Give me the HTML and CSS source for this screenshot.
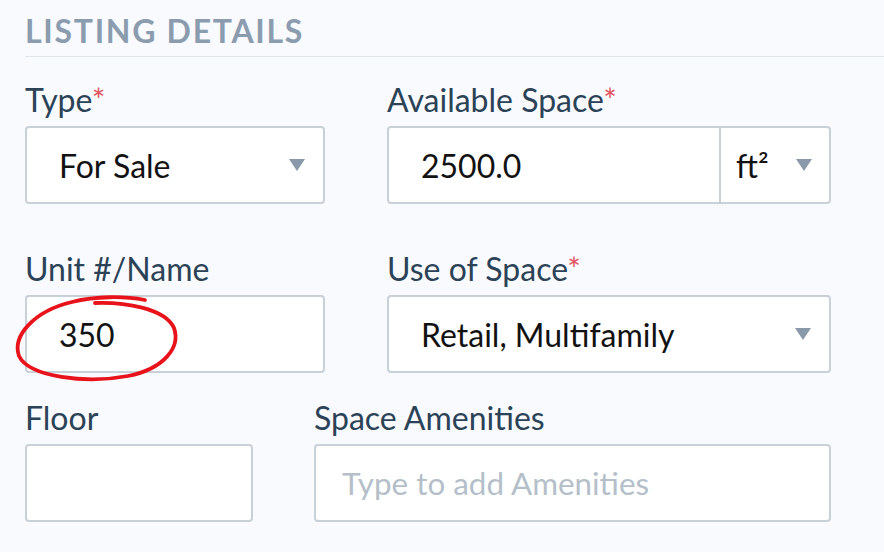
FILE: index.html
```html
<!DOCTYPE html>
<html lang="en">
<head>
<meta charset="utf-8">
<title>Listing Details</title>
<link rel="stylesheet" href="styles.css">
</head>
<body>
<section class="panel">
  <h2 class="section-title">Listing Details</h2>

  <div class="row row-1">
    <div class="field w-type">
      <label class="label">Type<span class="req">*</span></label>
      <div class="control select">
        <span class="value">For Sale</span>
        <span class="caret"></span>
      </div>
    </div>
    <div class="field w-wide">
      <label class="label">Available Space<span class="req">*</span></label>
      <div class="control split">
        <span class="value grow">2500.0</span>
        <span class="unit">ft²<span class="caret"></span></span>
      </div>
    </div>
  </div>

  <div class="row row-2">
    <div class="field w-type">
      <label class="label">Unit #/Name</label>
      <div class="control">
        <span class="value">350</span>
      </div>
    </div>
    <div class="field w-wide">
      <label class="label">Use of Space<span class="req">*</span></label>
      <div class="control select">
        <span class="value">Retail, Multifamily</span>
        <span class="caret"></span>
      </div>
    </div>
  </div>

  <div class="row row-3">
    <div class="field w-floor">
      <label class="label">Floor</label>
      <div class="control"></div>
    </div>
    <div class="field w-amen">
      <label class="label">Space Amenities</label>
      <div class="control tags">
        <span class="value placeholder">Type to add Amenities</span>
      </div>
    </div>
  </div>

  <svg class="annotation" width="200" height="110" viewBox="0 0 200 110" aria-hidden="true">
    <path d="M145 20 C124 16, 96 16, 72 22 C34 31, 12 56, 19 76 C29 97, 86 104, 128 96 C163 89, 181 68, 174 48 C165 28, 124 22, 95 23"
          fill="none" stroke="#e8121b" stroke-width="3.8" stroke-linecap="round" stroke-linejoin="round"/>
  </svg>
</section>
</body>
</html>
```

FILE: styles.css
```css
* { box-sizing: border-box; }

html, body {
  margin: 0;
  padding: 0;
  background: #f8fafd;
}

body {
  font-family: Lato, "Open Sans", "Liberation Sans", sans-serif;
  overflow: hidden;
}

.panel {
  position: relative;
  padding: 13px 0 0 25px;
  width: 884px;
  height: 552px;
}

.section-title {
  margin: 0 0 24px 0;
  padding: 0 0 7px 0;
  font-size: 32px;
  line-height: 36px;
  font-weight: 700;
  letter-spacing: 1.7px;
  text-transform: uppercase;
  color: #8c9caf;
  border-bottom: 1.5px solid #dfe5eb;
}

.row {
  display: flex;
  gap: 62px;
}
.row-1 { margin-bottom: 46px; }
.row-2 { margin-bottom: 26px; }
.row-3 { gap: 61px; }

.field {
  display: flex;
  flex-direction: column;
}
.w-type { width: 300px; }
.w-wide { width: 444px; }
.w-floor { width: 228px; }
.w-amen { width: 517px; }

.label {
  font-size: 32px;
  line-height: 38px;
  color: #2b4257;
  margin-bottom: 7px;
}
.req {
  color: #e2545e;
}

.control {
  height: 78px;
  background: #fff;
  border: 2px solid #c8d0d8;
  border-radius: 4px;
  display: flex;
  align-items: center;
  padding: 0 0 0 32px;
}

.value {
  font-size: 32px;
  color: #121212;
  white-space: nowrap;
}
.tags { padding-left: 26px; }
.placeholder {
  color: #b4bfca;
  font-size: 31.4px;
}

.select {
  justify-content: space-between;
  padding-right: 18px;
}

.caret {
  width: 0;
  height: 0;
  border-left: 8px solid transparent;
  border-right: 8px solid transparent;
  border-top: 12px solid #8a99a9;
}

.split { padding-right: 0; }
.grow { flex: 1; }
.unit {
  width: 110px;
  height: 100%;
  border-left: 2px solid #c8d0d8;
  display: flex;
  align-items: center;
  justify-content: space-between;
  padding: 0 17px 0 15px;
  font-size: 32px;
  color: #121212;
}

.annotation {
  position: absolute;
  left: 0;
  top: 280px;
}
```
